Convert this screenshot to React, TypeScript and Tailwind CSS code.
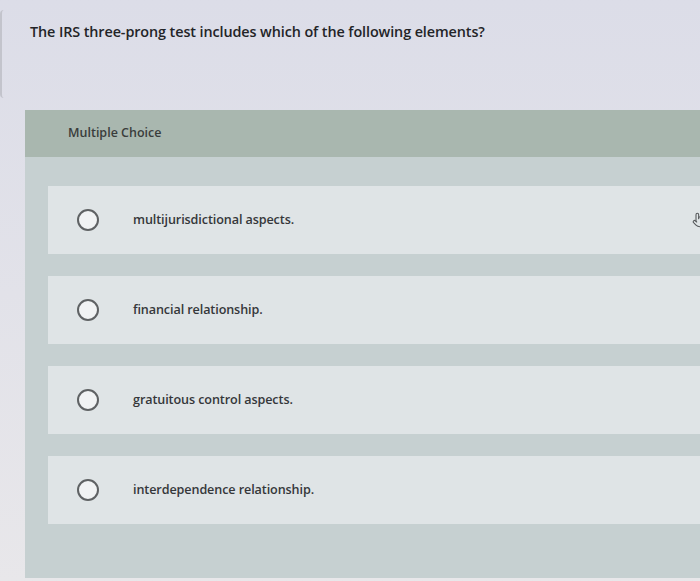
import React from 'react';
import { Pointer } from 'lucide-react';

const options = [
  'multijurisdictional aspects.',
  'financial relationship.',
  'gratuitous control aspects.',
  'interdependence relationship.',
];

const Radio: React.FC = () => (
  <span className="block w-[22px] h-[22px] rounded-full border-2 border-[#5f6264] bg-[#f1f3f4] shrink-0" />
);

const App: React.FC = () => {
  return (
    <div
      className="w-[700px] h-[581px] overflow-hidden bg-gradient-to-b from-[#dcdde8] to-[#e8e7ea] text-[#2a2b2d]"
      style={{ fontFamily: '"Open Sans", "Liberation Sans", sans-serif' }}
    >
      <div className="h-[88px] mt-[10px] border-l-2 border-[#c3c4cc] rounded-l-sm pl-[28px] pt-[11px]">
        <p className="text-[14.4px] font-semibold tracking-[-0.1px] text-[#232427]">
          The IRS three-prong test includes which of the following elements?
        </p>
      </div>

      <div className="mt-[12px] ml-[25px] h-[468px] flex flex-col">
        <div className="h-[47px] bg-[#a9b7af] flex items-center pl-[43px]">
          <span className="text-[12.5px] font-semibold tracking-[0px] text-[#3a3d3c]">Multiple Choice</span>
        </div>
        <div className="flex-1 bg-[#c6d0d1] pt-[29px] pl-[23px] flex flex-col gap-[22px]">
          {options.map((opt, i) => (
            <div key={opt} className="h-[68px] bg-[#dfe4e6] flex items-center pl-[29px]">
              <Radio />
              <span className="ml-[34px] text-[12.6px] font-semibold tracking-[-0.1px] text-[#35373a]">{opt}</span>
              {i === 0 && (
                <Pointer className="ml-auto -mr-[8px] w-[16px] h-[16px] text-[#55585a]" strokeWidth={1.6} />
              )}
            </div>
          ))}
        </div>
      </div>
    </div>
  );
};

export default App;
